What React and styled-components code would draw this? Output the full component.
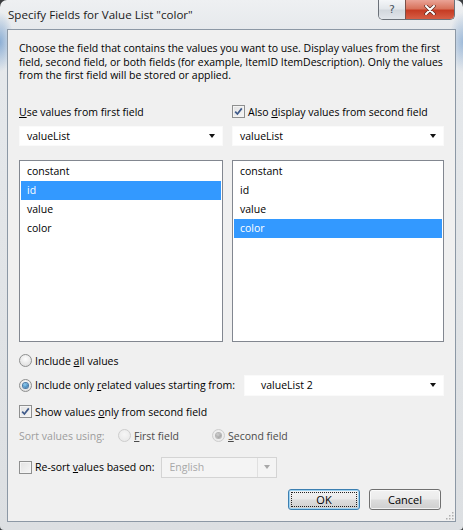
import React from "react";
import styled, { createGlobalStyle } from "styled-components";

const Global = createGlobalStyle`
  html, body {
    margin: 0;
    padding: 0;
    background: #3a3d40;
  }
  body {
    width: 463px;
    height: 530px;
    overflow: hidden;
  }
`;

const Window = styled.div`
  width: 463px;
  height: 530px;
  box-sizing: border-box;
  border-radius: 7px 7px 4px 4px;
  display: flex;
  flex-direction: column;
  position: relative;
  background:
    radial-gradient(ellipse 14px 30px at 0 42px, rgba(110, 155, 205, 0.75), rgba(110, 155, 205, 0)),
    radial-gradient(ellipse 14px 30px at 100% 42px, rgba(110, 155, 205, 0.6), rgba(110, 155, 205, 0)),
    linear-gradient(180deg, #eef0f2 0, #e6e9ec 30px, #dcdfe2 100%);
  font-family: "Segoe UI", "Open Sans", "Noto Sans", sans-serif;
  font-size: 10.5px;
  color: #000;
`;

const TitleBar = styled.div`
  height: 29px;
  display: flex;
  align-items: flex-start;
`;

const Title = styled.div`
  padding: 7px 0 0 8px;
  font-size: 11.6px;
  color: #1a1a1a;
  white-space: nowrap;
`;

const CaptionButtons = styled.div`
  margin-left: auto;
  margin-right: 8px;
  display: flex;
  height: 19px;
  border: 1px solid #6b7179;
  border-top: none;
  border-radius: 0 0 5px 5px;
  overflow: hidden;
`;

const CaptionButton = styled.div`
  width: ${({ $w }) => $w}px;
  display: flex;
  align-items: center;
  justify-content: center;
  background: ${({ $close }) =>
    $close
      ? "linear-gradient(180deg, #eaa396 0, #d8735c 45%, #c63c24 55%, #d65e45 100%)"
      : "linear-gradient(180deg, #f4f6f8 0, #e3e7eb 45%, #d2d7dd 55%, #e1e5ea 100%)"};
  border-left: ${({ $close }) => ($close ? "1px solid #7a5048" : "none")};
  font-family: "DejaVu Sans", sans-serif;
  font-size: 11px;
  color: #4a5360;
`;

const Client = styled.div`
  flex: 1;
  margin: 0 7px 8px 7px;
  border: 1px solid #8c98a5;
  background: #f0f0f0;
  padding: 11px 11px 0 11px;
  display: flex;
  flex-direction: column;
  position: relative;
`;

const Intro = styled.p`
  margin: 0;
  padding-top: 1px;
  line-height: 13.5px;
  white-space: pre-line;
`;

const Columns = styled.div`
  margin-top: 22px;
  display: grid;
  grid-template-columns: 204px 212px;
  column-gap: 9px;
`;

const Column = styled.div`
  display: flex;
  flex-direction: column;
`;

const Line = styled.div`
  height: ${({ $h }) => $h || 14}px;
  margin-top: ${({ $mt }) => $mt || 0}px;
  display: flex;
  align-items: center;
  white-space: nowrap;
  color: ${({ $disabled }) => ($disabled ? "#9d9d9d" : "#000")};
`;

const Text = styled.span`
  white-space: pre;
`;

const Key = styled.span`
  text-decoration: underline;
  text-underline-offset: 1px;
`;

const Select = styled.div`
  height: ${({ $h }) => $h || 20}px;
  width: ${({ $w }) => ($w ? `${$w}px` : "auto")};
  margin-top: ${({ $mt }) => $mt || 0}px;
  margin-left: ${({ $ml }) => ($ml === "auto" ? "auto" : `${$ml || 0}px`)};
  box-sizing: border-box;
  display: flex;
  align-items: center;
  padding-left: ${({ $pl }) => $pl || 7}px;
  background: ${({ $disabled }) => ($disabled ? "#f4f4f4" : "#fff")};
  border: 1px solid ${({ $disabled }) => ($disabled ? "#d4d4d4" : "#fafafa")};
  color: ${({ $disabled }) => ($disabled ? "#a8a8a8" : "#000")};
`;

const SelectText = styled.span`
  flex: 1;
`;

const Arrow = styled.span`
  width: ${({ $sep }) => ($sep ? 18 : 16)}px;
  align-self: stretch;
  display: flex;
  align-items: center;
  justify-content: center;
  border-left: ${({ $sep }) => ($sep ? "1px solid #e0e0e0" : "none")};
  margin-right: ${({ $sep }) => ($sep ? 0 : 2)}px;

  &::after {
    content: "";
    border-left: 3.5px solid transparent;
    border-right: 3.5px solid transparent;
    border-top: 4px solid ${({ $disabled }) => ($disabled ? "#a8a8a8" : "#111")};
  }
`;

const ListBox = styled.div`
  margin-top: 14px;
  height: 182px;
  box-sizing: border-box;
  border: 1px solid #828790;
  background: #fff;
  padding: 1px;
`;

const Item = styled.div`
  height: 19px;
  line-height: 19px;
  padding-left: 6px;
  background: ${({ $selected }) => ($selected ? "#3399ff" : "transparent")};
  color: ${({ $selected }) => ($selected ? "#fff" : "#000")};
`;

const Radio = styled.span`
  width: 13px;
  height: 13px;
  box-sizing: border-box;
  border-radius: 50%;
  border: 1px solid ${({ $disabled }) => ($disabled ? "#cdcdcd" : "#8e8f8f")};
  background: ${({ $disabled }) =>
    $disabled
      ? "radial-gradient(circle at 50% 40%, #f6f6f6, #e6e6e6)"
      : "radial-gradient(circle at 50% 35%, #fdfdfd, #d8d8d8)"};
  margin-right: 3px;
  display: flex;
  align-items: center;
  justify-content: center;
  flex-shrink: 0;

  &::after {
    content: "";
    display: ${({ $checked }) => ($checked ? "block" : "none")};
    width: 5px;
    height: 5px;
    border-radius: 50%;
    background: ${({ $disabled }) =>
      $disabled
        ? "radial-gradient(circle at 40% 35%, #d0d0d0, #8e8e8e)"
        : "radial-gradient(circle at 40% 35%, #8fd0f5, #1f5f9a)"};
    box-shadow: 0 0 0 1px ${({ $disabled }) => ($disabled ? "#b5b5b5" : "#4b7aa6")};
  }
`;

const Box = styled.span`
  width: 13px;
  height: 13px;
  box-sizing: border-box;
  border: 1px solid #8e8f8f;
  background: linear-gradient(135deg, #e2e2e2 0, #f6f6f6 100%);
  box-shadow: inset 0 0 0 1px #f4f4f4;
  margin-right: 3px;
  display: flex;
  align-items: center;
  justify-content: center;
  flex-shrink: 0;
`;

const Check = () => (
  <svg width="9" height="9" viewBox="0 0 9 9">
    <path d="M1.2 4.6 L3.4 7 L7.8 1.4" fill="none" stroke="#3f5a8a" strokeWidth="1.7" />
  </svg>
);

const SortLabel = styled.span`
  width: 99px;
  color: #9d9d9d;
`;

const SortOption = styled.span`
  width: ${({ $w }) => $w}px;
  display: flex;
  align-items: center;
  color: #4a4a4a;
`;

const Buttons = styled.div`
  margin-top: 11px;
  display: flex;
  justify-content: flex-end;
  gap: 9px;
  padding-right: 3px;
`;

const Button = styled.div`
  width: 72px;
  height: 21px;
  box-sizing: border-box;
  border-radius: 3px;
  border: 1px solid ${({ $default }) => ($default ? "#3c7fb1" : "#707070")};
  background: linear-gradient(180deg, #f2f2f2 0, #ebebeb 48%, #dddddd 52%, #cfcfcf 100%);
  box-shadow: ${({ $default }) =>
    $default ? "inset 0 0 0 1px #9fd3f2" : "inset 0 0 0 1px rgba(255, 255, 255, 0.7)"};
  display: flex;
  align-items: center;
  justify-content: center;
  position: relative;
  font-size: 11px;

  &::before {
    content: "";
    display: ${({ $default }) => ($default ? "block" : "none")};
    position: absolute;
    inset: 2px;
    border: 1px dotted #222;
  }
`;

const Grip = styled.svg`
  position: absolute;
  right: 1px;
  bottom: 1px;
`;

export default function App() {
  return (
    <>
      <Global />
      <Window>
        <TitleBar>
          <Title>Specify Fields for Value List "color"</Title>
          <CaptionButtons>
            <CaptionButton $w={26}>?</CaptionButton>
            <CaptionButton $w={48} $close>
              <svg width="12" height="10" viewBox="0 0 12 10">
                <path d="M2 1 L10 9 M10 1 L2 9" stroke="#5a2a22" strokeWidth="3.4" strokeLinecap="round" />
                <path d="M2 1 L10 9 M10 1 L2 9" stroke="#fff" strokeWidth="2" strokeLinecap="round" />
              </svg>
            </CaptionButton>
          </CaptionButtons>
        </TitleBar>

        <Client>
          <Intro>
            {"Choose the field that contains the values you want to use. Display values from the first\nfield, second field, or both fields (for example, ItemID ItemDescription). Only the values\nfrom the first field will be stored or applied."}
          </Intro>

          <Columns>
            <Column>
              <Line>
                <Text>
                  <Key>U</Key>se values from first field
                </Text>
              </Line>
              <Select $h={20} $mt={7}>
                <SelectText>valueList</SelectText>
                <Arrow />
              </Select>
              <ListBox>
                <Item>constant</Item>
                <Item $selected>id</Item>
                <Item>value</Item>
                <Item>color</Item>
              </ListBox>
            </Column>
            <Column>
              <Line>
                <Box>
                  <Check />
                </Box>
                <Text>
                  Also <Key>d</Key>isplay values from second field
                </Text>
              </Line>
              <Select $h={20} $mt={7}>
                <SelectText>valueList</SelectText>
                <Arrow />
              </Select>
              <ListBox>
                <Item>constant</Item>
                <Item>id</Item>
                <Item>value</Item>
                <Item $selected>color</Item>
              </ListBox>
            </Column>
          </Columns>

          <Line $mt={12}>
            <Radio />
            <Text>
              Include <Key>a</Key>ll values
            </Text>
          </Line>
          <Line $mt={7} $h={21}>
            <Radio $checked />
            <Text>
              Include only <Key>r</Key>elated values starting from:
            </Text>
            <Select $h={21} $w={200} $ml="auto" $pl={16}>
              <SelectText>valueList 2</SelectText>
              <Arrow />
            </Select>
          </Line>
          <Line $mt={9}>
            <Box>
              <Check />
            </Box>
            <Text>
              Show values <Key>o</Key>nly from second field
            </Text>
          </Line>
          <Line $mt={10}>
            <SortLabel>Sort values using:</SortLabel>
            <SortOption $w={94}>
              <Radio $disabled />
              <Text>
                <Key>F</Key>irst field
              </Text>
            </SortOption>
            <SortOption $w={90}>
              <Radio $disabled $checked />
              <Text>
                <Key>S</Key>econd field
              </Text>
            </SortOption>
          </Line>
          <Line $mt={14} $h={21}>
            <Box />
            <Text>
              Re-sort <Key>v</Key>alues based on:
            </Text>
            <Select $h={21} $w={116} $ml={7} $pl={7} $disabled>
              <SelectText>English</SelectText>
              <Arrow $sep $disabled />
            </Select>
          </Line>

          <Buttons>
            <Button $default>OK</Button>
            <Button>Cancel</Button>
          </Buttons>

          <Grip width="10" height="10" viewBox="0 0 10 10">
            {[
              [8, 2],
              [8, 5],
              [5, 5],
              [8, 8],
              [5, 8],
              [2, 8],
            ].map(([x, y]) => (
              <rect key={`${x}-${y}`} x={x} y={y} width="1.5" height="1.5" fill="#b0b0b0" />
            ))}
          </Grip>
        </Client>
      </Window>
    </>
  );
}
